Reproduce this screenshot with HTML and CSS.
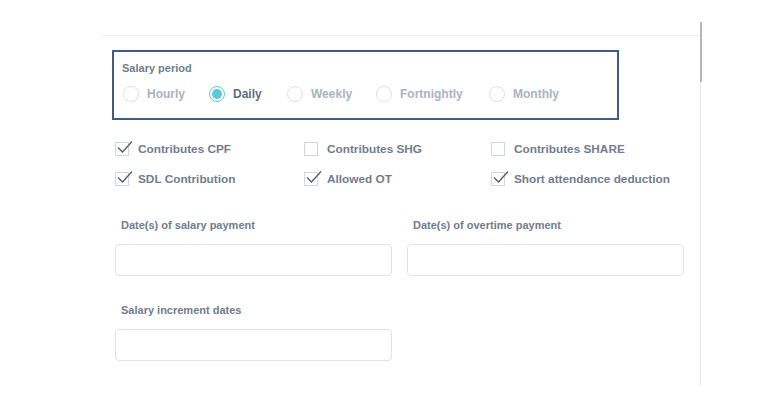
FILE: index.html
```html
<!DOCTYPE html>
<html>
<head>
<meta charset="utf-8">
<link rel="stylesheet" href="styles.css">
</head>
<body>
<div class="panel">
  <div class="scroll-thumb"></div>
  <div class="topbar"></div>
  <div class="content">
    <div class="period-box">
      <div class="period-label">Salary period</div>
      <div class="radios">
        <label class="radio"><span class="circle"></span><span class="rtext">Hourly</span></label>
        <label class="radio on"><span class="circle"></span><span class="rtext">Daily</span></label>
        <label class="radio"><span class="circle"></span><span class="rtext">Weekly</span></label>
        <label class="radio"><span class="circle"></span><span class="rtext">Fortnightly</span></label>
        <label class="radio"><span class="circle"></span><span class="rtext">Monthly</span></label>
      </div>
    </div>
    <div class="checks">
      <div class="check on"><span class="box"><svg viewBox="0 0 18 16" width="18" height="16"><path d="M2 8.5 L6.5 13 L16 2.5" fill="none" stroke="#555b63" stroke-width="1.3"/></svg></span>Contributes CPF</div>
      <div class="check"><span class="box"></span>Contributes SHG</div>
      <div class="check"><span class="box"></span>Contributes SHARE</div>
      <div class="check on"><span class="box"><svg viewBox="0 0 18 16" width="18" height="16"><path d="M2 8.5 L6.5 13 L16 2.5" fill="none" stroke="#555b63" stroke-width="1.3"/></svg></span>SDL Contribution</div>
      <div class="check on"><span class="box"><svg viewBox="0 0 18 16" width="18" height="16"><path d="M2 8.5 L6.5 13 L16 2.5" fill="none" stroke="#555b63" stroke-width="1.3"/></svg></span>Allowed OT</div>
      <div class="check on"><span class="box"><svg viewBox="0 0 18 16" width="18" height="16"><path d="M2 8.5 L6.5 13 L16 2.5" fill="none" stroke="#555b63" stroke-width="1.3"/></svg></span>Short attendance deduction</div>
    </div>
    <div class="fields">
      <div class="field">
        <div class="flabel">Date(s) of salary payment</div>
        <div class="input"></div>
      </div>
      <div class="field">
        <div class="flabel">Date(s) of overtime payment</div>
        <div class="input"></div>
      </div>
      <div class="field">
        <div class="flabel">Salary increment dates</div>
        <div class="input"></div>
      </div>
    </div>
  </div>
</div>
</body>
</html>
```
FILE: styles.css
```css
html, body {
  margin: 0;
  padding: 0;
  background: #ffffff;
}
body {
  padding: 22px 0 0 100px;
  font-family: "Liberation Sans", Arial, sans-serif;
  font-weight: bold;
}
.panel {
  position: relative;
  width: 601px;
  height: 363px;
  border-right: 1px solid #e4e4e4;
  box-sizing: border-box;
}
.scroll-thumb {
  position: absolute;
  right: -2px;
  top: 0;
  width: 2px;
  height: 60px;
  background: #b8b8b8;
}
.topbar {
  height: 13px;
  border-bottom: 1px solid #edf1f5;
}
.content {
  padding: 14px 0 0 0;
}
.period-box {
  margin-left: 12px;
  width: 507px;
  height: 70px;
  box-sizing: border-box;
  border: 2px solid #3f5b87;
  padding: 9px 0 0 8px;
}
.period-label {
  font-size: 11px;
  line-height: 14px;
  color: #6f7d8f;
}
.radios {
  display: flex;
  margin-top: 10px;
  margin-left: 1px;
}
.radio {
  display: flex;
  align-items: center;
  font-size: 12px;
  color: #a9b3c0;
  height: 18px;
}
.radio .circle {
  width: 16px;
  height: 16px;
  border: 1px solid #d8e0e6;
  border-radius: 50%;
  box-sizing: border-box;
  margin-right: 8px;
  position: relative;
}
.radio.on .circle {
  border-color: #5fcbd9;
}
.radio.on .circle::after {
  content: "";
  position: absolute;
  left: 2px;
  top: 2px;
  width: 10px;
  height: 10px;
  border-radius: 50%;
  background: #5bc9d8;
}
.radio.on .rtext {
  color: #5f6c7d;
}
.radio:nth-child(1) { width: 86px; }
.radio:nth-child(2) { width: 78px; }
.radio:nth-child(3) { width: 89px; }
.radio:nth-child(4) { width: 113px; }
.checks {
  display: grid;
  grid-template-columns: 189px 187px 190px;
  row-gap: 12px;
  margin: 20px 0 0 15px;
}
.check {
  display: flex;
  align-items: center;
  font-size: 11.8px;
  color: #6f7d8f;
  height: 18px;
}
.check .box {
  width: 14px;
  height: 14px;
  border: 1px solid #cdd7df;
  box-sizing: border-box;
  margin-right: 9px;
  position: relative;
}
.check .box svg {
  position: absolute;
  left: 0;
  top: -4px;
}
.fields {
  display: grid;
  grid-template-columns: 277px 277px;
  column-gap: 15px;
  row-gap: 27px;
  margin: 30px 0 0 15px;
}
.flabel {
  font-size: 11px;
  line-height: 14px;
  color: #6f7d8f;
  margin: 0 0 12px 6px;
}
.input {
  height: 32px;
  border: 1px solid #dde3e8;
  border-radius: 4px;
  box-sizing: border-box;
}
```
